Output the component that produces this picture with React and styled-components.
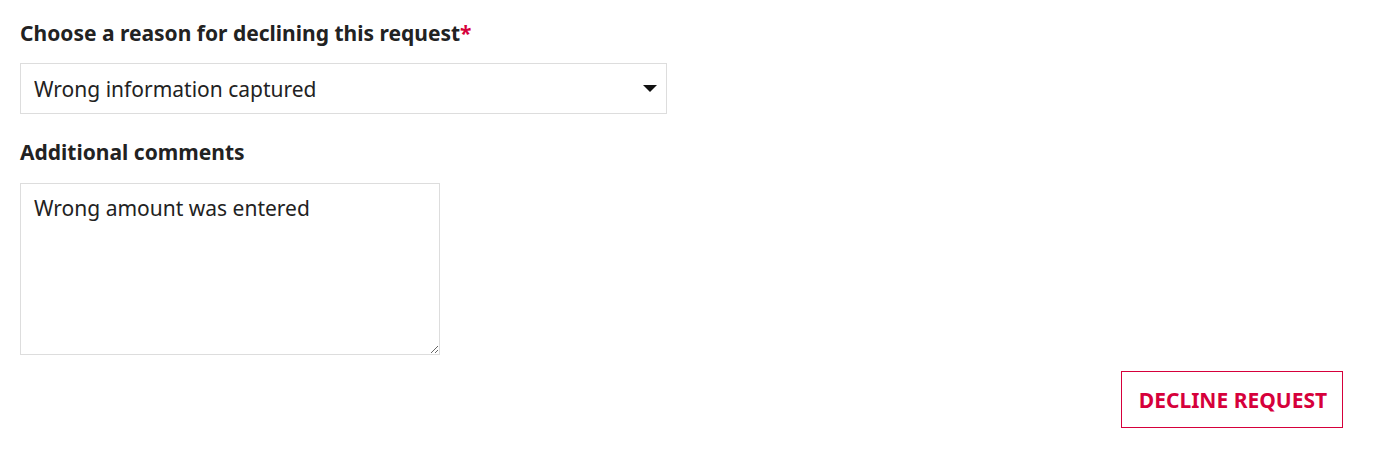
import React from "react";
import styled, { createGlobalStyle } from "styled-components";

const Global = createGlobalStyle`
  html, body { margin: 0; padding: 0; background: #fff; }
  body { font-family: "Noto Sans", "Open Sans", sans-serif; color: #222; }
`;

const Form = styled.form`
  box-sizing: border-box;
  width: 1394px;
  padding: 19px 51px 0 20px;
  display: flex;
  flex-direction: column;
`;

const Field = styled.div`
  display: flex;
  flex-direction: column;
  margin-bottom: ${(p) => p.$mb || 0}px;
`;

const Label = styled.label`
  font-size: 21px;
  line-height: 28px;
  font-weight: 700;
  color: #222;
  margin-bottom: ${(p) => p.$mb}px;
`;

const Required = styled.span`
  color: #d6003b;
`;

const SelectWrap = styled.div`
  position: relative;
  width: 647px;
`;

const Select = styled.select`
  appearance: none;
  -webkit-appearance: none;
  box-sizing: border-box;
  width: 100%;
  height: 51px;
  border: 1px solid #ddd;
  border-radius: 0;
  background: #fff;
  padding: 0 40px 0 13px;
  font-family: "Noto Sans", "Open Sans", sans-serif;
  font-size: 21px;
  color: #222;
  outline: none;
`;

const Caret = styled.svg`
  position: absolute;
  right: 10px;
  top: 22px;
  pointer-events: none;
`;

const TextArea = styled.textarea`
  box-sizing: border-box;
  width: 420px;
  height: 172px;
  border: 1px solid #ddd;
  border-radius: 0;
  padding: 10px 13px;
  font-family: "Noto Sans", "Open Sans", sans-serif;
  font-size: 21px;
  line-height: 28px;
  color: #222;
  outline: none;
`;

const Actions = styled.div`
  display: flex;
  justify-content: flex-end;
  margin-top: 16px;
`;

const DeclineButton = styled.button`
  box-sizing: border-box;
  width: 222px;
  height: 57px;
  border: 1px solid #d6003b;
  background: #fff;
  color: #d6003b;
  font-family: "Noto Sans", "Open Sans", sans-serif;
  font-size: 21px;
  font-weight: 700;
  text-transform: uppercase;
  cursor: pointer;
  padding: 0 0 0 2px;
`;

export default function App() {
  return (
    <>
      <Global />
      <Form onSubmit={(e) => e.preventDefault()}>
        <Field $mb={24}>
          <Label $mb={16} htmlFor="reason">
            Choose a reason for declining this request<Required>*</Required>
          </Label>
          <SelectWrap>
            <Select id="reason" defaultValue="wrong">
              <option value="wrong">Wrong information captured</option>
              <option value="dup">Duplicate request</option>
            </Select>
            <Caret width="14" height="8" viewBox="0 0 14 8">
              <path d="M0 0 H14 L7 7 Z" fill="#111" />
            </Caret>
          </SelectWrap>
        </Field>
        <Field>
          <Label $mb={17} htmlFor="comments">
            Additional comments
          </Label>
          <TextArea id="comments" defaultValue="Wrong amount was entered" />
        </Field>
        <Actions>
          <DeclineButton type="submit">Decline request</DeclineButton>
        </Actions>
      </Form>
    </>
  );
}
